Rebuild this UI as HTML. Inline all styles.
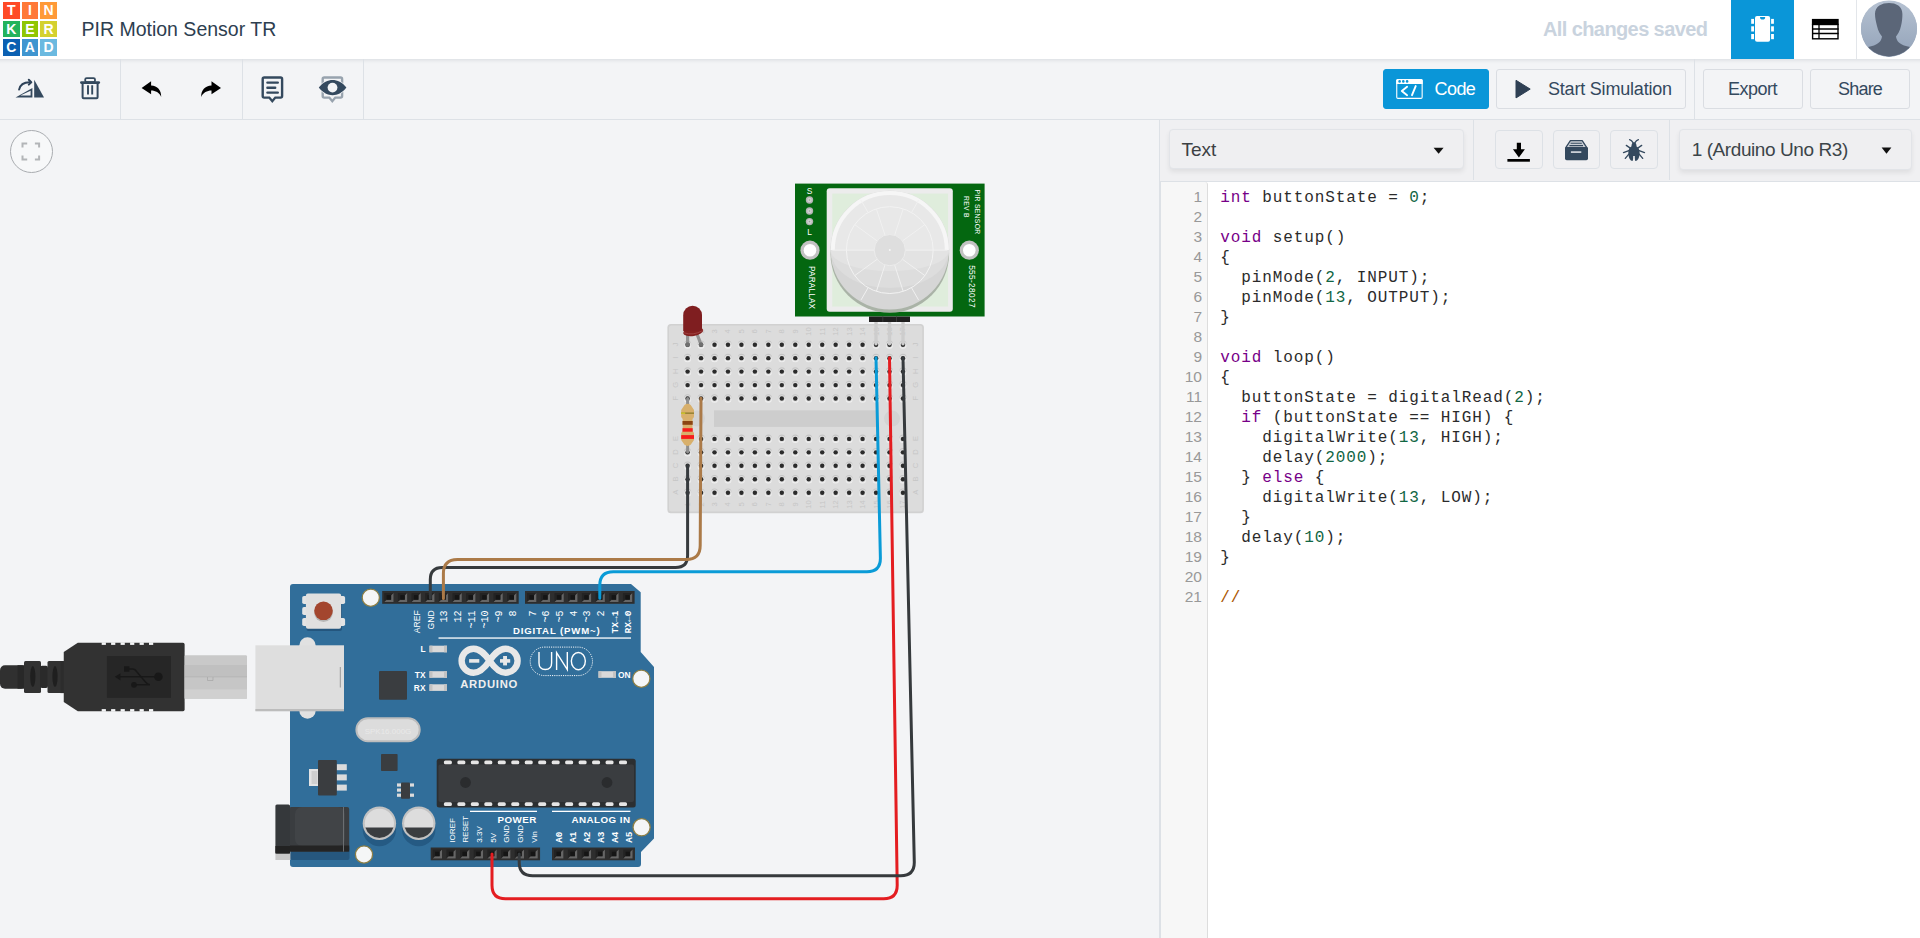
<!DOCTYPE html>
<html><head><meta charset="utf-8">
<style>
html,body{margin:0;padding:0;width:1920px;height:938px;overflow:hidden;background:#f3f4f6;font-family:"Liberation Sans",sans-serif;}
.a{position:absolute;}
#hdr{left:0;top:0;width:1920px;height:59px;background:#fff;z-index:3;}
.lc{position:absolute;width:16.6px;height:16.6px;color:#fff;font-weight:bold;font-size:14px;line-height:17px;text-align:center;}
#tb{left:0;top:59px;width:1920px;height:60px;background:linear-gradient(#dfe3e7 0px,#e5e7ea 1px,#eaebee 2px,#eef0f2 3px,#f1f2f4 4px,#f3f4f6 5px);border-bottom:1px solid #dde1e6;z-index:2;}
.vsep{position:absolute;width:1px;background:#dde1e6;}
.btn{position:absolute;box-sizing:border-box;height:40px;border:1px solid #dadde2;border-radius:3px;background:#f3f4f6;color:#34495e;font-size:18px;}
.btn span{position:absolute;white-space:nowrap;}
#cv{left:0;top:120px;width:1159px;height:818px;background:#f3f4f6;overflow:hidden;}
#cp{left:1159px;top:120px;width:761px;height:818px;background:#f0f0f2;border-left:1px solid #dde1e6;}
.code{position:absolute;left:1220.6px;top:0;font-family:"Liberation Mono",monospace;font-size:16px;letter-spacing:0.9px;line-height:20px;white-space:pre;color:#2b2b2b;}
.ln{position:absolute;right:0;font-family:"Liberation Sans",sans-serif;font-size:15.5px;color:#999;text-align:right;}
.k{color:#770088}.n{color:#116644}.c{color:#aa5500}
</style></head><body>

<!-- HEADER -->
<div id="hdr" class="a">
  <div class="lc" style="left:3px;top:2px;background:#ff4a26">T</div>
  <div class="lc" style="left:21.6px;top:2px;background:#ff7938">I</div>
  <div class="lc" style="left:40.2px;top:2px;background:#ff9a38">N</div>
  <div class="lc" style="left:3px;top:20.6px;background:#22b35c">K</div>
  <div class="lc" style="left:21.6px;top:20.6px;background:#8fc602">E</div>
  <div class="lc" style="left:40.2px;top:20.6px;background:#d4d12f">R</div>
  <div class="lc" style="left:3px;top:39.2px;background:#0b60b2">C</div>
  <div class="lc" style="left:21.6px;top:39.2px;background:#3f95d0">A</div>
  <div class="lc" style="left:40.2px;top:39.2px;background:#6ab9e0">D</div>
  <div class="a" id="title" style="left:81.5px;top:17px;font-size:19.5px;color:#2d3e50;white-space:nowrap;line-height:24px;">PIR Motion Sensor TR</div>
  <div class="a" id="saved" style="left:1543px;top:17px;font-size:20px;font-weight:bold;color:#c9d3de;white-space:nowrap;line-height:24px;letter-spacing:-0.6px;">All changes saved</div>
  <div class="a" style="left:1731px;top:0;width:63px;height:59px;background:#0a96d8;"></div>
  <div class="a" style="left:1856px;top:0;width:1px;height:59px;background:#e3e6ea;"></div>
  <div class="a" style="left:1861px;top:1px;width:56px;height:56px;border-radius:50%;background:#9aa8bb;overflow:hidden;"></div>
</div>

<!-- TOOLBAR -->
<div id="tb" class="a">
  <div class="vsep" style="left:120px;top:0;height:60px"></div>
  <div class="vsep" style="left:242px;top:0;height:60px"></div>
  <div class="vsep" style="left:363px;top:0;height:60px"></div>
  <div class="vsep" style="left:1694px;top:0;height:60px"></div>
  <div class="btn" style="left:1383px;top:10px;width:106px;background:#0a96d8;border-color:#0a96d8;color:#fff;"><span id="tcode" style="left:50.5px;top:9px;letter-spacing:-0.55px;">Code</span></div>
  <div class="btn" style="left:1496px;top:10px;width:190px;"><span id="tsim" style="left:51px;top:9px;letter-spacing:-0.2px;">Start Simulation</span></div>
  <div class="btn" style="left:1703px;top:10px;width:100px;"><span id="texp" style="left:24px;top:9px;letter-spacing:-0.5px;">Export</span></div>
  <div class="btn" style="left:1810px;top:10px;width:100px;"><span id="tshare" style="left:27px;top:9px;letter-spacing:-0.8px;">Share</span></div>
</div>

<!-- CANVAS -->
<div id="cv" class="a">
  <div class="a" style="left:10px;top:10px;width:41px;height:41px;border:1px solid #a9acb0;border-radius:50%;background:#f7f8f9;"></div>
</div>

<!--CIRC-->
<svg class="a" id="circ" style="left:0;top:0;z-index:1;" width="1920" height="938" viewBox="0 0 1920 938">
<g id="usb">
<rect x="0" y="665.2" width="26" height="23.5" rx="5" fill="#303030"/><rect x="17.5" y="665.2" width="8" height="23.5" fill="#282828"/>
<rect x="24" y="661.1" width="17" height="32" rx="1.5" fill="#323232"/>
<rect x="40" y="665.8" width="8" height="22.3" rx="2" fill="#2a2a2a"/>
<rect x="47.5" y="661.1" width="17" height="32" rx="1.5" fill="#323232"/><rect x="60.5" y="661.1" width="3.5" height="32" fill="#2c2c2c"/>
<ellipse cx="32.8" cy="676.6" rx="2.6" ry="10.5" fill="#1f1f1f"/>
<ellipse cx="55" cy="676.6" rx="2.6" ry="10.5" fill="#1f1f1f"/>
<path d="M63.75 652 L77.8 642.8 H183 Q184.6 642.8 184.6 644.4 V709.6 Q184.6 711.2 183 711.2 H77.8 L63.75 702 Z" fill="#323232"/>
<rect x="101.7" y="642.3" width="4.2" height="2.6" fill="#f3f4f6"/>
<rect x="101.7" y="709.1" width="4.2" height="2.6" fill="#f3f4f6"/>
<rect x="111.1" y="642.3" width="4.2" height="2.6" fill="#f3f4f6"/>
<rect x="111.1" y="709.1" width="4.2" height="2.6" fill="#f3f4f6"/>
<rect x="120.6" y="642.3" width="4.2" height="2.6" fill="#f3f4f6"/>
<rect x="120.6" y="709.1" width="4.2" height="2.6" fill="#f3f4f6"/>
<rect x="130.1" y="642.3" width="4.2" height="2.6" fill="#f3f4f6"/>
<rect x="130.1" y="709.1" width="4.2" height="2.6" fill="#f3f4f6"/>
<rect x="139.6" y="642.3" width="4.2" height="2.6" fill="#f3f4f6"/>
<rect x="139.6" y="709.1" width="4.2" height="2.6" fill="#f3f4f6"/>
<rect x="149.0" y="642.3" width="4.2" height="2.6" fill="#f3f4f6"/>
<rect x="149.0" y="709.1" width="4.2" height="2.6" fill="#f3f4f6"/>
<rect x="106.9" y="656" width="64.1" height="41.8" fill="#262626"/>
<g fill="#181818" stroke="#181818">
<path d="M119 676.8 H157" stroke-width="1.6" fill="none"/>
<path d="M114.8 676.8 L120.5 673.2 L120.5 680.4 Z" stroke="none"/>
<circle cx="158.4" cy="676.8" r="4.3" stroke="none"/>
<rect x="124" y="666.3" width="5.4" height="5.4" stroke="none"/>
<path d="M129 669 H133 Q135 669 137 672 L141 676.8" fill="none" stroke-width="1.5"/>
<path d="M141 676.8 L145.5 682 Q147.5 684.8 150 684.8 H134" fill="none" stroke-width="1.5"/>
<circle cx="134" cy="684.8" r="2.9" stroke="none"/>
</g>
<rect x="184.7" y="655.25" width="62.3" height="43.5" rx="1.2" fill="#c9c9c9"/>
<rect x="184.7" y="665" width="62.3" height="11.8" fill="#c0c0c0"/>
<rect x="184.7" y="676.6" width="62.3" height="0.9" fill="#adadad"/>
<rect x="184.7" y="677.5" width="62.3" height="12" fill="#c6c6c6"/>
<rect x="184.7" y="689.4" width="62.3" height="9.35" fill="#d0d0d0"/>
<path d="M207.5 677 V680.5 H213 V677" fill="none" stroke="#aaaaaa" stroke-width="0.8"/>
</g>
<g id="arduino">
<path d="M293 584 H631 L640.7 592.3 V652 L654 667 V838.5 L641 852 V864 Q641 867 638 867 H293 Q290 867 290 864 V587 Q290 584 293 584 Z" fill="#316e9a"/>
<circle cx="307.5" cy="645.5" r="8.2" fill="#e1e1e1"/>
<circle cx="307.5" cy="710.5" r="8.2" fill="#e1e1e1"/>
<rect x="255.4" y="645.3" width="88.6" height="65.7" fill="#dedede"/>
<rect x="255.4" y="709" width="88.6" height="2.3" fill="#bcbcbc"/>
<rect x="339.8" y="667" width="1" height="20.5" fill="#9a9a9a"/>
<rect x="306.5" y="595" width="35.5" height="36" rx="2" fill="#24567e"/>
<rect x="302.2" y="596" width="6" height="8" rx="1.8" fill="#e4e4e4"/>
<rect x="302.2" y="607.1" width="6" height="8" rx="1.8" fill="#e4e4e4"/>
<rect x="302.2" y="618" width="6" height="8" rx="1.8" fill="#e4e4e4"/>
<rect x="339" y="596" width="6.1" height="8" rx="1.8" fill="#e4e4e4"/>
<rect x="339" y="618" width="6.1" height="8" rx="1.8" fill="#e4e4e4"/>
<rect x="305.9" y="593.5" width="35.2" height="35.2" rx="2" fill="#e0e0e0"/>
<circle cx="323.5" cy="612.6" r="9.3" fill="#9a9a9a" opacity="0.6"/>
<circle cx="323.5" cy="610.8" r="9.3" fill="#a3462e"/>
<circle cx="370.8" cy="597.7" r="8.6" fill="#f5f6f7" stroke="#8e7f45" stroke-width="1.3"/>
<circle cx="641.3" cy="678.7" r="8.6" fill="#f5f6f7" stroke="#8e7f45" stroke-width="1.3"/>
<circle cx="641.6" cy="827.3" r="8.6" fill="#f5f6f7" stroke="#8e7f45" stroke-width="1.3"/>
<circle cx="364" cy="854.5" r="8.6" fill="#f5f6f7" stroke="#8e7f45" stroke-width="1.3"/>
<rect x="382.2" y="591" width="136.50" height="12.8" fill="#2e2e2e"/>
<rect x="384.22" y="593.10" width="9.3" height="9" fill="#232323"/>
<path d="M393.52 593.10 V602.10 H384.22 L386.62 599.70 H391.12 V595.40 Z" fill="#666"/>
<rect x="386.62" y="595.20" width="4.5" height="4.5" fill="#151515"/>
<rect x="397.88" y="593.10" width="9.3" height="9" fill="#232323"/>
<path d="M407.18 593.10 V602.10 H397.88 L400.28 599.70 H404.78 V595.40 Z" fill="#666"/>
<rect x="400.28" y="595.20" width="4.5" height="4.5" fill="#151515"/>
<rect x="411.52" y="593.10" width="9.3" height="9" fill="#232323"/>
<path d="M420.82 593.10 V602.10 H411.52 L413.93 599.70 H418.43 V595.40 Z" fill="#666"/>
<rect x="413.93" y="595.20" width="4.5" height="4.5" fill="#151515"/>
<rect x="425.17" y="593.10" width="9.3" height="9" fill="#232323"/>
<path d="M434.47 593.10 V602.10 H425.17 L427.57 599.70 H432.07 V595.40 Z" fill="#666"/>
<rect x="427.57" y="595.20" width="4.5" height="4.5" fill="#151515"/>
<rect x="438.82" y="593.10" width="9.3" height="9" fill="#232323"/>
<path d="M448.12 593.10 V602.10 H438.82 L441.23 599.70 H445.73 V595.40 Z" fill="#666"/>
<rect x="441.23" y="595.20" width="4.5" height="4.5" fill="#151515"/>
<rect x="452.47" y="593.10" width="9.3" height="9" fill="#232323"/>
<path d="M461.77 593.10 V602.10 H452.47 L454.88 599.70 H459.38 V595.40 Z" fill="#666"/>
<rect x="454.88" y="595.20" width="4.5" height="4.5" fill="#151515"/>
<rect x="466.12" y="593.10" width="9.3" height="9" fill="#232323"/>
<path d="M475.43 593.10 V602.10 H466.12 L468.53 599.70 H473.03 V595.40 Z" fill="#666"/>
<rect x="468.53" y="595.20" width="4.5" height="4.5" fill="#151515"/>
<rect x="479.77" y="593.10" width="9.3" height="9" fill="#232323"/>
<path d="M489.07 593.10 V602.10 H479.77 L482.18 599.70 H486.68 V595.40 Z" fill="#666"/>
<rect x="482.18" y="595.20" width="4.5" height="4.5" fill="#151515"/>
<rect x="493.43" y="593.10" width="9.3" height="9" fill="#232323"/>
<path d="M502.73 593.10 V602.10 H493.43 L495.83 599.70 H500.33 V595.40 Z" fill="#666"/>
<rect x="495.83" y="595.20" width="4.5" height="4.5" fill="#151515"/>
<rect x="507.07" y="593.10" width="9.3" height="9" fill="#232323"/>
<path d="M516.38 593.10 V602.10 H507.07 L509.48 599.70 H513.98 V595.40 Z" fill="#666"/>
<rect x="509.48" y="595.20" width="4.5" height="4.5" fill="#151515"/>
<rect x="525" y="591" width="109.60" height="12.8" fill="#2e2e2e"/>
<rect x="527.05" y="593.10" width="9.3" height="9" fill="#232323"/>
<path d="M536.35 593.10 V602.10 H527.05 L529.45 599.70 H533.95 V595.40 Z" fill="#666"/>
<rect x="529.45" y="595.20" width="4.5" height="4.5" fill="#151515"/>
<rect x="540.75" y="593.10" width="9.3" height="9" fill="#232323"/>
<path d="M550.05 593.10 V602.10 H540.75 L543.15 599.70 H547.65 V595.40 Z" fill="#666"/>
<rect x="543.15" y="595.20" width="4.5" height="4.5" fill="#151515"/>
<rect x="554.45" y="593.10" width="9.3" height="9" fill="#232323"/>
<path d="M563.75 593.10 V602.10 H554.45 L556.85 599.70 H561.35 V595.40 Z" fill="#666"/>
<rect x="556.85" y="595.20" width="4.5" height="4.5" fill="#151515"/>
<rect x="568.15" y="593.10" width="9.3" height="9" fill="#232323"/>
<path d="M577.45 593.10 V602.10 H568.15 L570.55 599.70 H575.05 V595.40 Z" fill="#666"/>
<rect x="570.55" y="595.20" width="4.5" height="4.5" fill="#151515"/>
<rect x="581.85" y="593.10" width="9.3" height="9" fill="#232323"/>
<path d="M591.15 593.10 V602.10 H581.85 L584.25 599.70 H588.75 V595.40 Z" fill="#666"/>
<rect x="584.25" y="595.20" width="4.5" height="4.5" fill="#151515"/>
<rect x="595.55" y="593.10" width="9.3" height="9" fill="#232323"/>
<path d="M604.85 593.10 V602.10 H595.55 L597.95 599.70 H602.45 V595.40 Z" fill="#666"/>
<rect x="597.95" y="595.20" width="4.5" height="4.5" fill="#151515"/>
<rect x="609.25" y="593.10" width="9.3" height="9" fill="#232323"/>
<path d="M618.55 593.10 V602.10 H609.25 L611.65 599.70 H616.15 V595.40 Z" fill="#666"/>
<rect x="611.65" y="595.20" width="4.5" height="4.5" fill="#151515"/>
<rect x="622.95" y="593.10" width="9.3" height="9" fill="#232323"/>
<path d="M632.25 593.10 V602.10 H622.95 L625.35 599.70 H629.85 V595.40 Z" fill="#666"/>
<rect x="625.35" y="595.20" width="4.5" height="4.5" fill="#151515"/>
<rect x="430.7" y="847.5" width="109.36" height="12.8" fill="#2e2e2e"/>
<rect x="432.73" y="849.60" width="9.3" height="9" fill="#232323"/>
<path d="M442.03 849.60 V858.60 H432.73 L435.13 856.20 H439.63 V851.90 Z" fill="#666"/>
<rect x="435.13" y="851.70" width="4.5" height="4.5" fill="#151515"/>
<rect x="446.40" y="849.60" width="9.3" height="9" fill="#232323"/>
<path d="M455.70 849.60 V858.60 H446.40 L448.81 856.20 H453.31 V851.90 Z" fill="#666"/>
<rect x="448.81" y="851.70" width="4.5" height="4.5" fill="#151515"/>
<rect x="460.07" y="849.60" width="9.3" height="9" fill="#232323"/>
<path d="M469.38 849.60 V858.60 H460.07 L462.48 856.20 H466.98 V851.90 Z" fill="#666"/>
<rect x="462.48" y="851.70" width="4.5" height="4.5" fill="#151515"/>
<rect x="473.74" y="849.60" width="9.3" height="9" fill="#232323"/>
<path d="M483.04 849.60 V858.60 H473.74 L476.14 856.20 H480.64 V851.90 Z" fill="#666"/>
<rect x="476.14" y="851.70" width="4.5" height="4.5" fill="#151515"/>
<rect x="487.41" y="849.60" width="9.3" height="9" fill="#232323"/>
<path d="M496.71 849.60 V858.60 H487.41 L489.81 856.20 H494.31 V851.90 Z" fill="#666"/>
<rect x="489.81" y="851.70" width="4.5" height="4.5" fill="#151515"/>
<rect x="501.08" y="849.60" width="9.3" height="9" fill="#232323"/>
<path d="M510.38 849.60 V858.60 H501.08 L503.49 856.20 H507.99 V851.90 Z" fill="#666"/>
<rect x="503.49" y="851.70" width="4.5" height="4.5" fill="#151515"/>
<rect x="514.75" y="849.60" width="9.3" height="9" fill="#232323"/>
<path d="M524.05 849.60 V858.60 H514.75 L517.15 856.20 H521.65 V851.90 Z" fill="#666"/>
<rect x="517.15" y="851.70" width="4.5" height="4.5" fill="#151515"/>
<rect x="528.43" y="849.60" width="9.3" height="9" fill="#232323"/>
<path d="M537.73 849.60 V858.60 H528.43 L530.83 856.20 H535.33 V851.90 Z" fill="#666"/>
<rect x="530.83" y="851.70" width="4.5" height="4.5" fill="#151515"/>
<rect x="552" y="847.5" width="82.98" height="12.8" fill="#2e2e2e"/>
<rect x="554.12" y="849.60" width="9.3" height="9" fill="#232323"/>
<path d="M563.41 849.60 V858.60 H554.12 L556.51 856.20 H561.01 V851.90 Z" fill="#666"/>
<rect x="556.51" y="851.70" width="4.5" height="4.5" fill="#151515"/>
<rect x="567.95" y="849.60" width="9.3" height="9" fill="#232323"/>
<path d="M577.25 849.60 V858.60 H567.95 L570.35 856.20 H574.85 V851.90 Z" fill="#666"/>
<rect x="570.35" y="851.70" width="4.5" height="4.5" fill="#151515"/>
<rect x="581.78" y="849.60" width="9.3" height="9" fill="#232323"/>
<path d="M591.08 849.60 V858.60 H581.78 L584.18 856.20 H588.68 V851.90 Z" fill="#666"/>
<rect x="584.18" y="851.70" width="4.5" height="4.5" fill="#151515"/>
<rect x="595.61" y="849.60" width="9.3" height="9" fill="#232323"/>
<path d="M604.90 849.60 V858.60 H595.61 L598.00 856.20 H602.50 V851.90 Z" fill="#666"/>
<rect x="598.00" y="851.70" width="4.5" height="4.5" fill="#151515"/>
<rect x="609.44" y="849.60" width="9.3" height="9" fill="#232323"/>
<path d="M618.74 849.60 V858.60 H609.44 L611.84 856.20 H616.34 V851.90 Z" fill="#666"/>
<rect x="611.84" y="851.70" width="4.5" height="4.5" fill="#151515"/>
<rect x="623.27" y="849.60" width="9.3" height="9" fill="#232323"/>
<path d="M632.57 849.60 V858.60 H623.27 L625.67 856.20 H630.17 V851.90 Z" fill="#666"/>
<rect x="625.67" y="851.70" width="4.5" height="4.5" fill="#151515"/>
<text transform="translate(416.93,610.30) rotate(-90)" font-family='"Liberation Sans"' font-size="8.6" font-weight="normal" fill="#fff" text-anchor="end" dominant-baseline="central" letter-spacing="0">AREF</text>
<text transform="translate(430.57,610.30) rotate(-90)" font-family='"Liberation Sans"' font-size="8.6" font-weight="normal" fill="#fff" text-anchor="end" dominant-baseline="central" letter-spacing="0">GND</text>
<text transform="translate(444.82,610.50) rotate(-90)" font-family='"Liberation Mono"' font-size="10" font-weight="normal" fill="#fff" text-anchor="end" dominant-baseline="central" letter-spacing="0">13</text>
<text transform="translate(458.47,610.50) rotate(-90)" font-family='"Liberation Mono"' font-size="10" font-weight="normal" fill="#fff" text-anchor="end" dominant-baseline="central" letter-spacing="0">12</text>
<text transform="translate(472.12,610.50) rotate(-90)" font-family='"Liberation Mono"' font-size="10" font-weight="normal" fill="#fff" text-anchor="end" dominant-baseline="central" letter-spacing="0">~11</text>
<text transform="translate(485.77,610.50) rotate(-90)" font-family='"Liberation Mono"' font-size="10" font-weight="normal" fill="#fff" text-anchor="end" dominant-baseline="central" letter-spacing="0">~10</text>
<text transform="translate(499.43,610.50) rotate(-90)" font-family='"Liberation Mono"' font-size="10" font-weight="normal" fill="#fff" text-anchor="end" dominant-baseline="central" letter-spacing="0">~9</text>
<text transform="translate(513.08,610.50) rotate(-90)" font-family='"Liberation Mono"' font-size="10" font-weight="normal" fill="#fff" text-anchor="end" dominant-baseline="central" letter-spacing="0">8</text>
<text transform="translate(533.05,610.50) rotate(-90)" font-family='"Liberation Mono"' font-size="10" font-weight="normal" fill="#fff" text-anchor="end" dominant-baseline="central" letter-spacing="0">7</text>
<text transform="translate(546.75,610.50) rotate(-90)" font-family='"Liberation Mono"' font-size="10" font-weight="normal" fill="#fff" text-anchor="end" dominant-baseline="central" letter-spacing="0">~6</text>
<text transform="translate(560.45,610.50) rotate(-90)" font-family='"Liberation Mono"' font-size="10" font-weight="normal" fill="#fff" text-anchor="end" dominant-baseline="central" letter-spacing="0">~5</text>
<text transform="translate(574.15,610.50) rotate(-90)" font-family='"Liberation Mono"' font-size="10" font-weight="normal" fill="#fff" text-anchor="end" dominant-baseline="central" letter-spacing="0">4</text>
<text transform="translate(587.85,610.50) rotate(-90)" font-family='"Liberation Mono"' font-size="10" font-weight="normal" fill="#fff" text-anchor="end" dominant-baseline="central" letter-spacing="0">~3</text>
<text transform="translate(601.55,610.50) rotate(-90)" font-family='"Liberation Mono"' font-size="10" font-weight="normal" fill="#fff" text-anchor="end" dominant-baseline="central" letter-spacing="0">2</text>
<text transform="translate(615.25,610.50) rotate(-90)" font-family='"Liberation Mono"' font-size="9.6" font-weight="bold" fill="#fff" text-anchor="end" dominant-baseline="central" letter-spacing="0">TX→1</text>
<text transform="translate(628.95,610.50) rotate(-90)" font-family='"Liberation Mono"' font-size="9.6" font-weight="bold" fill="#fff" text-anchor="end" dominant-baseline="central" letter-spacing="0">RX←0</text>
<text x="513" y="634.4" font-family="Liberation Sans" font-size="9.6" font-weight="bold" fill="#fff" letter-spacing="0.85">DIGITAL (PWM~)</text>
<rect x="438.5" y="637.4" width="192.5" height="1.3" fill="#fff"/>
<rect x="429.5" y="645.7" width="17.5" height="6.6" fill="#d9d9d9"/>
<rect x="429.5" y="645.7" width="3" height="6.6" fill="#c3c3c3"/><rect x="444" y="645.7" width="3" height="6.6" fill="#c3c3c3"/>
<text x="425.5" y="652.1" font-family="Liberation Sans" font-size="8.4" font-weight="bold" fill="#fff" text-anchor="end">L</text>
<rect x="429.5" y="671.2" width="17.5" height="6.6" fill="#d9d9d9"/>
<rect x="429.5" y="671.2" width="3" height="6.6" fill="#c3c3c3"/><rect x="444" y="671.2" width="3" height="6.6" fill="#c3c3c3"/>
<text x="425.5" y="677.6" font-family="Liberation Sans" font-size="8.4" font-weight="bold" fill="#fff" text-anchor="end">TX</text>
<rect x="429.5" y="684.3" width="17.5" height="6.6" fill="#d9d9d9"/>
<rect x="429.5" y="684.3" width="3" height="6.6" fill="#c3c3c3"/><rect x="444" y="684.3" width="3" height="6.6" fill="#c3c3c3"/>
<text x="425.5" y="690.7" font-family="Liberation Sans" font-size="8.4" font-weight="bold" fill="#fff" text-anchor="end">RX</text>
<rect x="598.5" y="671.2" width="17.5" height="6.6" fill="#d9d9d9"/>
<rect x="598.5" y="671.2" width="3" height="6.6" fill="#c3c3c3"/><rect x="613" y="671.2" width="3" height="6.6" fill="#c3c3c3"/>
<text x="618" y="678" font-family="Liberation Sans" font-size="8.4" font-weight="bold" fill="#fff">ON</text>
<rect x="379" y="671" width="28" height="28.7" rx="1" fill="#3a3d40"/>
<path d="M489.6 660.7 C486 655.5 481 648.7 473.6 648.7 A12 12 0 0 0 473.6 672.7 C481 672.7 486 666 489.6 660.7 C493.2 655.5 498.2 648.7 505.6 648.7 A12 12 0 0 1 505.6 672.7 C498.2 672.7 493.2 666 489.6 660.7 Z" fill="none" stroke="#e8e8e8" stroke-width="6.4"/>
<rect x="469.1" y="659.1" width="10.2" height="3.6" fill="#e8e8e8"/>
<rect x="500" y="659.1" width="10.2" height="3.6" fill="#e8e8e8"/><rect x="503.1" y="656" width="3.9" height="9.4" fill="#e8e8e8"/>
<text x="460.2" y="688.2" font-family="Liberation Sans" font-size="11.3" font-weight="bold" fill="#eeeeee" letter-spacing="0.75">ARDUINO</text>
<rect x="530.2" y="647.1" width="62.3" height="28.5" rx="14.25" fill="none" stroke="#fff" stroke-width="1" stroke-dasharray="1.1 1.1"/>
<g fill="none" stroke="#fff" stroke-width="1.4">
<path d="M539 652.1 V663 Q539 669.5 545.3 669.5 Q551.6 669.5 551.6 663 V652.1"/>
<path d="M556.6 670 V652.6 L567.3 669.5 V652.1"/>
<ellipse cx="578.35" cy="661.1" rx="7" ry="8.6"/>
</g>
<rect x="356.4" y="718.3" width="63.3" height="22.9" rx="11.45" fill="#dcdcdc" stroke="#bdbdbd" stroke-width="2"/>
<text x="388" y="733.6" font-family="Liberation Sans" font-size="8" fill="#e9e9e9" text-anchor="middle">SPK16.000G</text>
<rect x="381" y="754" width="16.6" height="17" rx="0.8" fill="#3a3d40"/>
<rect x="309" y="769" width="10" height="17" fill="#e4e4e4"/>
<rect x="311.5" y="771" width="6" height="13" fill="#cfcfcf"/>
<rect x="336.5" y="764.2" width="10.3" height="6" fill="#dcdcdc"/>
<rect x="336.5" y="774.4" width="10.3" height="6" fill="#dcdcdc"/>
<rect x="336.5" y="784.6" width="10.3" height="6" fill="#dcdcdc"/>
<rect x="318" y="759.9" width="18.8" height="35.5" rx="1" fill="#3a3d40"/>
<rect x="397" y="783.4" width="5" height="3.2" fill="#dcdcdc"/>
<rect x="397" y="788.5" width="5" height="3.2" fill="#dcdcdc"/>
<rect x="397" y="793.6" width="5" height="3.2" fill="#dcdcdc"/>
<rect x="409" y="783.4" width="5" height="3.2" fill="#dcdcdc"/>
<rect x="409" y="793.6" width="5" height="3.2" fill="#dcdcdc"/>
<rect x="401" y="782.5" width="9" height="16.3" rx="0.8" fill="#3a3d40"/>
<circle cx="379.4" cy="829.5" r="16.7" fill="#255a83"/>
<circle cx="379.4" cy="823.3" r="16.7" fill="#c2c2c2"/>
<circle cx="379.4" cy="823.3" r="14.6" fill="#dddddd"/>
<path d="M365.35 827.4 H393.45 A14.6 14.6 0 0 1 365.35 827.4 Z" fill="#3a3d40"/>
<circle cx="418.75" cy="829.5" r="16.7" fill="#255a83"/>
<circle cx="418.75" cy="823.3" r="16.7" fill="#c2c2c2"/>
<circle cx="418.75" cy="823.3" r="14.6" fill="#dddddd"/>
<path d="M404.70 827.4 H432.80 A14.6 14.6 0 0 1 404.70 827.4 Z" fill="#3a3d40"/>
<rect x="290" y="846" width="59.5" height="14" rx="2" fill="#26577e"/>
<rect x="275.4" y="849" width="15" height="11" fill="#c8c8c8"/>
<rect x="289.2" y="807" width="60" height="44.6" rx="2" fill="#3a3d40"/>
<rect x="295" y="807" width="50" height="39" rx="7" fill="#414447"/>
<rect x="289.2" y="845.5" width="60" height="6.1" fill="#242424"/>
<rect x="343" y="807" width="1" height="44.6" fill="#6b6e71"/>
<rect x="275.4" y="804.6" width="14.6" height="48.9" rx="1.5" fill="#35383b"/>
<rect x="275.4" y="846" width="14.6" height="7.5" fill="#222"/>
<rect x="436.7" y="758.7" width="199" height="48.8" rx="2.5" fill="#2c2f31"/>
<rect x="438.4" y="764.5" width="195.6" height="37.5" rx="2" fill="#3a3d40"/>
<rect x="443.90" y="760.6" width="8" height="3.6" rx="1.5" fill="#e6e6e6"/>
<rect x="443.90" y="802.3" width="8" height="3.6" rx="1.5" fill="#e6e6e6"/>
<rect x="457.37" y="760.6" width="8" height="3.6" rx="1.5" fill="#e6e6e6"/>
<rect x="457.37" y="802.3" width="8" height="3.6" rx="1.5" fill="#e6e6e6"/>
<rect x="470.84" y="760.6" width="8" height="3.6" rx="1.5" fill="#e6e6e6"/>
<rect x="470.84" y="802.3" width="8" height="3.6" rx="1.5" fill="#e6e6e6"/>
<rect x="484.31" y="760.6" width="8" height="3.6" rx="1.5" fill="#e6e6e6"/>
<rect x="484.31" y="802.3" width="8" height="3.6" rx="1.5" fill="#e6e6e6"/>
<rect x="497.78" y="760.6" width="8" height="3.6" rx="1.5" fill="#e6e6e6"/>
<rect x="497.78" y="802.3" width="8" height="3.6" rx="1.5" fill="#e6e6e6"/>
<rect x="511.25" y="760.6" width="8" height="3.6" rx="1.5" fill="#e6e6e6"/>
<rect x="511.25" y="802.3" width="8" height="3.6" rx="1.5" fill="#e6e6e6"/>
<rect x="524.72" y="760.6" width="8" height="3.6" rx="1.5" fill="#e6e6e6"/>
<rect x="524.72" y="802.3" width="8" height="3.6" rx="1.5" fill="#e6e6e6"/>
<rect x="538.19" y="760.6" width="8" height="3.6" rx="1.5" fill="#e6e6e6"/>
<rect x="538.19" y="802.3" width="8" height="3.6" rx="1.5" fill="#e6e6e6"/>
<rect x="551.66" y="760.6" width="8" height="3.6" rx="1.5" fill="#e6e6e6"/>
<rect x="551.66" y="802.3" width="8" height="3.6" rx="1.5" fill="#e6e6e6"/>
<rect x="565.13" y="760.6" width="8" height="3.6" rx="1.5" fill="#e6e6e6"/>
<rect x="565.13" y="802.3" width="8" height="3.6" rx="1.5" fill="#e6e6e6"/>
<rect x="578.60" y="760.6" width="8" height="3.6" rx="1.5" fill="#e6e6e6"/>
<rect x="578.60" y="802.3" width="8" height="3.6" rx="1.5" fill="#e6e6e6"/>
<rect x="592.07" y="760.6" width="8" height="3.6" rx="1.5" fill="#e6e6e6"/>
<rect x="592.07" y="802.3" width="8" height="3.6" rx="1.5" fill="#e6e6e6"/>
<rect x="605.54" y="760.6" width="8" height="3.6" rx="1.5" fill="#e6e6e6"/>
<rect x="605.54" y="802.3" width="8" height="3.6" rx="1.5" fill="#e6e6e6"/>
<rect x="619.01" y="760.6" width="8" height="3.6" rx="1.5" fill="#e6e6e6"/>
<rect x="619.01" y="802.3" width="8" height="3.6" rx="1.5" fill="#e6e6e6"/>
<circle cx="465.5" cy="782.5" r="5.4" fill="#2a2c2e"/><circle cx="607" cy="782.5" r="5.4" fill="#2a2c2e"/>
<rect x="470" y="810.7" width="67" height="1.3" fill="#fff"/>
<rect x="552" y="810.7" width="78.5" height="1.3" fill="#fff"/>
<text x="536.8" y="822.6" font-family="Liberation Sans" font-size="9.8" font-weight="bold" fill="#fff" text-anchor="end" letter-spacing="0.45">POWER</text>
<text x="630.5" y="822.6" font-family="Liberation Sans" font-size="9.8" font-weight="bold" fill="#fff" text-anchor="end" letter-spacing="0.45">ANALOG IN</text>
<text transform="translate(452.00,842.80) rotate(-90)" font-family='"Liberation Sans"' font-size="8.1" font-weight="normal" fill="#fff" text-anchor="start" dominant-baseline="central" letter-spacing="0">IOREF</text>
<text transform="translate(465.68,842.80) rotate(-90)" font-family='"Liberation Sans"' font-size="8.1" font-weight="normal" fill="#fff" text-anchor="start" dominant-baseline="central" letter-spacing="0">RESET</text>
<text transform="translate(479.34,842.80) rotate(-90)" font-family='"Liberation Sans"' font-size="8.1" font-weight="normal" fill="#fff" text-anchor="start" dominant-baseline="central" letter-spacing="0">3.3V</text>
<text transform="translate(493.01,842.80) rotate(-90)" font-family='"Liberation Sans"' font-size="8.1" font-weight="normal" fill="#fff" text-anchor="start" dominant-baseline="central" letter-spacing="0">5V</text>
<text transform="translate(506.69,842.80) rotate(-90)" font-family='"Liberation Sans"' font-size="8.1" font-weight="normal" fill="#fff" text-anchor="start" dominant-baseline="central" letter-spacing="0">GND</text>
<text transform="translate(520.35,842.80) rotate(-90)" font-family='"Liberation Sans"' font-size="8.1" font-weight="normal" fill="#fff" text-anchor="start" dominant-baseline="central" letter-spacing="0">GND</text>
<text transform="translate(534.02,842.80) rotate(-90)" font-family='"Liberation Sans"' font-size="8.1" font-weight="normal" fill="#fff" text-anchor="start" dominant-baseline="central" letter-spacing="0">Vin</text>
<text transform="translate(559.91,842.80) rotate(-90)" font-family='"Liberation Mono"' font-size="9.4" font-weight="bold" fill="#fff" text-anchor="start" dominant-baseline="central" letter-spacing="0">A0</text>
<text transform="translate(573.75,842.80) rotate(-90)" font-family='"Liberation Mono"' font-size="9.4" font-weight="bold" fill="#fff" text-anchor="start" dominant-baseline="central" letter-spacing="0">A1</text>
<text transform="translate(587.58,842.80) rotate(-90)" font-family='"Liberation Mono"' font-size="9.4" font-weight="bold" fill="#fff" text-anchor="start" dominant-baseline="central" letter-spacing="0">A2</text>
<text transform="translate(601.40,842.80) rotate(-90)" font-family='"Liberation Mono"' font-size="9.4" font-weight="bold" fill="#fff" text-anchor="start" dominant-baseline="central" letter-spacing="0">A3</text>
<text transform="translate(615.24,842.80) rotate(-90)" font-family='"Liberation Mono"' font-size="9.4" font-weight="bold" fill="#fff" text-anchor="start" dominant-baseline="central" letter-spacing="0">A4</text>
<text transform="translate(629.07,842.80) rotate(-90)" font-family='"Liberation Mono"' font-size="9.4" font-weight="bold" fill="#fff" text-anchor="start" dominant-baseline="central" letter-spacing="0">A5</text>
</g>
<g id="bb">
<rect x="667.4" y="324" width="256.5" height="189.2" rx="3.5" fill="#d1d1d1"/>
<rect x="669" y="325.6" width="253.3" height="186" rx="2.5" fill="#dcdcdc"/>
<circle cx="697" cy="418.6" r="8" fill="#d3d3d3"/><circle cx="892" cy="418.6" r="8" fill="#d3d3d3"/>
<rect x="714" y="410.3" width="163.8" height="16.6" fill="#cdcdcd"/>
<defs><g id="bh"><circle cx="0" cy="-0.7" r="3.5" fill="#c4c4c4"/><circle cx="0" cy="0.7" r="3.5" fill="#f0f0f0"/><circle cx="0" cy="0" r="3.1" fill="#dcdcdc"/><circle cx="0" cy="0.1" r="2.2" fill="#2b2b2b"/></g></defs>
<use href="#bh" x="687.60" y="344.60"/>
<use href="#bh" x="687.60" y="358.06"/>
<use href="#bh" x="687.60" y="371.52"/>
<use href="#bh" x="687.60" y="384.98"/>
<use href="#bh" x="687.60" y="398.44"/>
<use href="#bh" x="687.60" y="438.80"/>
<use href="#bh" x="687.60" y="452.26"/>
<use href="#bh" x="687.60" y="465.72"/>
<use href="#bh" x="687.60" y="479.18"/>
<use href="#bh" x="687.60" y="492.64"/>
<use href="#bh" x="701.06" y="344.60"/>
<use href="#bh" x="701.06" y="358.06"/>
<use href="#bh" x="701.06" y="371.52"/>
<use href="#bh" x="701.06" y="384.98"/>
<use href="#bh" x="701.06" y="398.44"/>
<use href="#bh" x="701.06" y="438.80"/>
<use href="#bh" x="701.06" y="452.26"/>
<use href="#bh" x="701.06" y="465.72"/>
<use href="#bh" x="701.06" y="479.18"/>
<use href="#bh" x="701.06" y="492.64"/>
<use href="#bh" x="714.52" y="344.60"/>
<use href="#bh" x="714.52" y="358.06"/>
<use href="#bh" x="714.52" y="371.52"/>
<use href="#bh" x="714.52" y="384.98"/>
<use href="#bh" x="714.52" y="398.44"/>
<use href="#bh" x="714.52" y="438.80"/>
<use href="#bh" x="714.52" y="452.26"/>
<use href="#bh" x="714.52" y="465.72"/>
<use href="#bh" x="714.52" y="479.18"/>
<use href="#bh" x="714.52" y="492.64"/>
<use href="#bh" x="727.98" y="344.60"/>
<use href="#bh" x="727.98" y="358.06"/>
<use href="#bh" x="727.98" y="371.52"/>
<use href="#bh" x="727.98" y="384.98"/>
<use href="#bh" x="727.98" y="398.44"/>
<use href="#bh" x="727.98" y="438.80"/>
<use href="#bh" x="727.98" y="452.26"/>
<use href="#bh" x="727.98" y="465.72"/>
<use href="#bh" x="727.98" y="479.18"/>
<use href="#bh" x="727.98" y="492.64"/>
<use href="#bh" x="741.44" y="344.60"/>
<use href="#bh" x="741.44" y="358.06"/>
<use href="#bh" x="741.44" y="371.52"/>
<use href="#bh" x="741.44" y="384.98"/>
<use href="#bh" x="741.44" y="398.44"/>
<use href="#bh" x="741.44" y="438.80"/>
<use href="#bh" x="741.44" y="452.26"/>
<use href="#bh" x="741.44" y="465.72"/>
<use href="#bh" x="741.44" y="479.18"/>
<use href="#bh" x="741.44" y="492.64"/>
<use href="#bh" x="754.90" y="344.60"/>
<use href="#bh" x="754.90" y="358.06"/>
<use href="#bh" x="754.90" y="371.52"/>
<use href="#bh" x="754.90" y="384.98"/>
<use href="#bh" x="754.90" y="398.44"/>
<use href="#bh" x="754.90" y="438.80"/>
<use href="#bh" x="754.90" y="452.26"/>
<use href="#bh" x="754.90" y="465.72"/>
<use href="#bh" x="754.90" y="479.18"/>
<use href="#bh" x="754.90" y="492.64"/>
<use href="#bh" x="768.36" y="344.60"/>
<use href="#bh" x="768.36" y="358.06"/>
<use href="#bh" x="768.36" y="371.52"/>
<use href="#bh" x="768.36" y="384.98"/>
<use href="#bh" x="768.36" y="398.44"/>
<use href="#bh" x="768.36" y="438.80"/>
<use href="#bh" x="768.36" y="452.26"/>
<use href="#bh" x="768.36" y="465.72"/>
<use href="#bh" x="768.36" y="479.18"/>
<use href="#bh" x="768.36" y="492.64"/>
<use href="#bh" x="781.82" y="344.60"/>
<use href="#bh" x="781.82" y="358.06"/>
<use href="#bh" x="781.82" y="371.52"/>
<use href="#bh" x="781.82" y="384.98"/>
<use href="#bh" x="781.82" y="398.44"/>
<use href="#bh" x="781.82" y="438.80"/>
<use href="#bh" x="781.82" y="452.26"/>
<use href="#bh" x="781.82" y="465.72"/>
<use href="#bh" x="781.82" y="479.18"/>
<use href="#bh" x="781.82" y="492.64"/>
<use href="#bh" x="795.28" y="344.60"/>
<use href="#bh" x="795.28" y="358.06"/>
<use href="#bh" x="795.28" y="371.52"/>
<use href="#bh" x="795.28" y="384.98"/>
<use href="#bh" x="795.28" y="398.44"/>
<use href="#bh" x="795.28" y="438.80"/>
<use href="#bh" x="795.28" y="452.26"/>
<use href="#bh" x="795.28" y="465.72"/>
<use href="#bh" x="795.28" y="479.18"/>
<use href="#bh" x="795.28" y="492.64"/>
<use href="#bh" x="808.74" y="344.60"/>
<use href="#bh" x="808.74" y="358.06"/>
<use href="#bh" x="808.74" y="371.52"/>
<use href="#bh" x="808.74" y="384.98"/>
<use href="#bh" x="808.74" y="398.44"/>
<use href="#bh" x="808.74" y="438.80"/>
<use href="#bh" x="808.74" y="452.26"/>
<use href="#bh" x="808.74" y="465.72"/>
<use href="#bh" x="808.74" y="479.18"/>
<use href="#bh" x="808.74" y="492.64"/>
<use href="#bh" x="822.20" y="344.60"/>
<use href="#bh" x="822.20" y="358.06"/>
<use href="#bh" x="822.20" y="371.52"/>
<use href="#bh" x="822.20" y="384.98"/>
<use href="#bh" x="822.20" y="398.44"/>
<use href="#bh" x="822.20" y="438.80"/>
<use href="#bh" x="822.20" y="452.26"/>
<use href="#bh" x="822.20" y="465.72"/>
<use href="#bh" x="822.20" y="479.18"/>
<use href="#bh" x="822.20" y="492.64"/>
<use href="#bh" x="835.66" y="344.60"/>
<use href="#bh" x="835.66" y="358.06"/>
<use href="#bh" x="835.66" y="371.52"/>
<use href="#bh" x="835.66" y="384.98"/>
<use href="#bh" x="835.66" y="398.44"/>
<use href="#bh" x="835.66" y="438.80"/>
<use href="#bh" x="835.66" y="452.26"/>
<use href="#bh" x="835.66" y="465.72"/>
<use href="#bh" x="835.66" y="479.18"/>
<use href="#bh" x="835.66" y="492.64"/>
<use href="#bh" x="849.12" y="344.60"/>
<use href="#bh" x="849.12" y="358.06"/>
<use href="#bh" x="849.12" y="371.52"/>
<use href="#bh" x="849.12" y="384.98"/>
<use href="#bh" x="849.12" y="398.44"/>
<use href="#bh" x="849.12" y="438.80"/>
<use href="#bh" x="849.12" y="452.26"/>
<use href="#bh" x="849.12" y="465.72"/>
<use href="#bh" x="849.12" y="479.18"/>
<use href="#bh" x="849.12" y="492.64"/>
<use href="#bh" x="862.58" y="344.60"/>
<use href="#bh" x="862.58" y="358.06"/>
<use href="#bh" x="862.58" y="371.52"/>
<use href="#bh" x="862.58" y="384.98"/>
<use href="#bh" x="862.58" y="398.44"/>
<use href="#bh" x="862.58" y="438.80"/>
<use href="#bh" x="862.58" y="452.26"/>
<use href="#bh" x="862.58" y="465.72"/>
<use href="#bh" x="862.58" y="479.18"/>
<use href="#bh" x="862.58" y="492.64"/>
<use href="#bh" x="876.04" y="344.60"/>
<use href="#bh" x="876.04" y="358.06"/>
<use href="#bh" x="876.04" y="371.52"/>
<use href="#bh" x="876.04" y="384.98"/>
<use href="#bh" x="876.04" y="398.44"/>
<use href="#bh" x="876.04" y="438.80"/>
<use href="#bh" x="876.04" y="452.26"/>
<use href="#bh" x="876.04" y="465.72"/>
<use href="#bh" x="876.04" y="479.18"/>
<use href="#bh" x="876.04" y="492.64"/>
<use href="#bh" x="889.50" y="344.60"/>
<use href="#bh" x="889.50" y="358.06"/>
<use href="#bh" x="889.50" y="371.52"/>
<use href="#bh" x="889.50" y="384.98"/>
<use href="#bh" x="889.50" y="398.44"/>
<use href="#bh" x="889.50" y="438.80"/>
<use href="#bh" x="889.50" y="452.26"/>
<use href="#bh" x="889.50" y="465.72"/>
<use href="#bh" x="889.50" y="479.18"/>
<use href="#bh" x="889.50" y="492.64"/>
<use href="#bh" x="902.96" y="344.60"/>
<use href="#bh" x="902.96" y="358.06"/>
<use href="#bh" x="902.96" y="371.52"/>
<use href="#bh" x="902.96" y="384.98"/>
<use href="#bh" x="902.96" y="398.44"/>
<use href="#bh" x="902.96" y="438.80"/>
<use href="#bh" x="902.96" y="452.26"/>
<use href="#bh" x="902.96" y="465.72"/>
<use href="#bh" x="902.96" y="479.18"/>
<use href="#bh" x="902.96" y="492.64"/>
<text transform="translate(687.60,331.50) rotate(-90)" font-family="Liberation Sans" font-size="7.6" fill="#c6c6c6" text-anchor="middle" dominant-baseline="central">1</text>
<text transform="translate(687.60,504.50) rotate(-90)" font-family="Liberation Sans" font-size="7.6" fill="#c6c6c6" text-anchor="middle" dominant-baseline="central">1</text>
<text transform="translate(701.06,331.50) rotate(-90)" font-family="Liberation Sans" font-size="7.6" fill="#c6c6c6" text-anchor="middle" dominant-baseline="central">2</text>
<text transform="translate(701.06,504.50) rotate(-90)" font-family="Liberation Sans" font-size="7.6" fill="#c6c6c6" text-anchor="middle" dominant-baseline="central">2</text>
<text transform="translate(714.52,331.50) rotate(-90)" font-family="Liberation Sans" font-size="7.6" fill="#c6c6c6" text-anchor="middle" dominant-baseline="central">3</text>
<text transform="translate(714.52,504.50) rotate(-90)" font-family="Liberation Sans" font-size="7.6" fill="#c6c6c6" text-anchor="middle" dominant-baseline="central">3</text>
<text transform="translate(727.98,331.50) rotate(-90)" font-family="Liberation Sans" font-size="7.6" fill="#c6c6c6" text-anchor="middle" dominant-baseline="central">4</text>
<text transform="translate(727.98,504.50) rotate(-90)" font-family="Liberation Sans" font-size="7.6" fill="#c6c6c6" text-anchor="middle" dominant-baseline="central">4</text>
<text transform="translate(741.44,331.50) rotate(-90)" font-family="Liberation Sans" font-size="7.6" fill="#c6c6c6" text-anchor="middle" dominant-baseline="central">5</text>
<text transform="translate(741.44,504.50) rotate(-90)" font-family="Liberation Sans" font-size="7.6" fill="#c6c6c6" text-anchor="middle" dominant-baseline="central">5</text>
<text transform="translate(754.90,331.50) rotate(-90)" font-family="Liberation Sans" font-size="7.6" fill="#c6c6c6" text-anchor="middle" dominant-baseline="central">6</text>
<text transform="translate(754.90,504.50) rotate(-90)" font-family="Liberation Sans" font-size="7.6" fill="#c6c6c6" text-anchor="middle" dominant-baseline="central">6</text>
<text transform="translate(768.36,331.50) rotate(-90)" font-family="Liberation Sans" font-size="7.6" fill="#c6c6c6" text-anchor="middle" dominant-baseline="central">7</text>
<text transform="translate(768.36,504.50) rotate(-90)" font-family="Liberation Sans" font-size="7.6" fill="#c6c6c6" text-anchor="middle" dominant-baseline="central">7</text>
<text transform="translate(781.82,331.50) rotate(-90)" font-family="Liberation Sans" font-size="7.6" fill="#c6c6c6" text-anchor="middle" dominant-baseline="central">8</text>
<text transform="translate(781.82,504.50) rotate(-90)" font-family="Liberation Sans" font-size="7.6" fill="#c6c6c6" text-anchor="middle" dominant-baseline="central">8</text>
<text transform="translate(795.28,331.50) rotate(-90)" font-family="Liberation Sans" font-size="7.6" fill="#c6c6c6" text-anchor="middle" dominant-baseline="central">9</text>
<text transform="translate(795.28,504.50) rotate(-90)" font-family="Liberation Sans" font-size="7.6" fill="#c6c6c6" text-anchor="middle" dominant-baseline="central">9</text>
<text transform="translate(808.74,331.50) rotate(-90)" font-family="Liberation Sans" font-size="7.6" fill="#c6c6c6" text-anchor="middle" dominant-baseline="central">10</text>
<text transform="translate(808.74,504.50) rotate(-90)" font-family="Liberation Sans" font-size="7.6" fill="#c6c6c6" text-anchor="middle" dominant-baseline="central">10</text>
<text transform="translate(822.20,331.50) rotate(-90)" font-family="Liberation Sans" font-size="7.6" fill="#c6c6c6" text-anchor="middle" dominant-baseline="central">11</text>
<text transform="translate(822.20,504.50) rotate(-90)" font-family="Liberation Sans" font-size="7.6" fill="#c6c6c6" text-anchor="middle" dominant-baseline="central">11</text>
<text transform="translate(835.66,331.50) rotate(-90)" font-family="Liberation Sans" font-size="7.6" fill="#c6c6c6" text-anchor="middle" dominant-baseline="central">12</text>
<text transform="translate(835.66,504.50) rotate(-90)" font-family="Liberation Sans" font-size="7.6" fill="#c6c6c6" text-anchor="middle" dominant-baseline="central">12</text>
<text transform="translate(849.12,331.50) rotate(-90)" font-family="Liberation Sans" font-size="7.6" fill="#c6c6c6" text-anchor="middle" dominant-baseline="central">13</text>
<text transform="translate(849.12,504.50) rotate(-90)" font-family="Liberation Sans" font-size="7.6" fill="#c6c6c6" text-anchor="middle" dominant-baseline="central">13</text>
<text transform="translate(862.58,331.50) rotate(-90)" font-family="Liberation Sans" font-size="7.6" fill="#c6c6c6" text-anchor="middle" dominant-baseline="central">14</text>
<text transform="translate(862.58,504.50) rotate(-90)" font-family="Liberation Sans" font-size="7.6" fill="#c6c6c6" text-anchor="middle" dominant-baseline="central">14</text>
<text transform="translate(876.04,331.50) rotate(-90)" font-family="Liberation Sans" font-size="7.6" fill="#c6c6c6" text-anchor="middle" dominant-baseline="central">15</text>
<text transform="translate(876.04,504.50) rotate(-90)" font-family="Liberation Sans" font-size="7.6" fill="#c6c6c6" text-anchor="middle" dominant-baseline="central">15</text>
<text transform="translate(889.50,331.50) rotate(-90)" font-family="Liberation Sans" font-size="7.6" fill="#c6c6c6" text-anchor="middle" dominant-baseline="central">16</text>
<text transform="translate(889.50,504.50) rotate(-90)" font-family="Liberation Sans" font-size="7.6" fill="#c6c6c6" text-anchor="middle" dominant-baseline="central">16</text>
<text transform="translate(902.96,331.50) rotate(-90)" font-family="Liberation Sans" font-size="7.6" fill="#c6c6c6" text-anchor="middle" dominant-baseline="central">17</text>
<text transform="translate(902.96,504.50) rotate(-90)" font-family="Liberation Sans" font-size="7.6" fill="#c6c6c6" text-anchor="middle" dominant-baseline="central">17</text>
<text transform="translate(675.60,344.30) rotate(-90)" font-family="Liberation Sans" font-size="7.6" fill="#c6c6c6" text-anchor="middle" dominant-baseline="central">J</text>
<text transform="translate(915.40,344.30) rotate(-90)" font-family="Liberation Sans" font-size="7.6" fill="#c6c6c6" text-anchor="middle" dominant-baseline="central">J</text>
<text transform="translate(675.60,357.76) rotate(-90)" font-family="Liberation Sans" font-size="7.6" fill="#c6c6c6" text-anchor="middle" dominant-baseline="central">I</text>
<text transform="translate(915.40,357.76) rotate(-90)" font-family="Liberation Sans" font-size="7.6" fill="#c6c6c6" text-anchor="middle" dominant-baseline="central">I</text>
<text transform="translate(675.60,371.22) rotate(-90)" font-family="Liberation Sans" font-size="7.6" fill="#c6c6c6" text-anchor="middle" dominant-baseline="central">H</text>
<text transform="translate(915.40,371.22) rotate(-90)" font-family="Liberation Sans" font-size="7.6" fill="#c6c6c6" text-anchor="middle" dominant-baseline="central">H</text>
<text transform="translate(675.60,384.68) rotate(-90)" font-family="Liberation Sans" font-size="7.6" fill="#c6c6c6" text-anchor="middle" dominant-baseline="central">G</text>
<text transform="translate(915.40,384.68) rotate(-90)" font-family="Liberation Sans" font-size="7.6" fill="#c6c6c6" text-anchor="middle" dominant-baseline="central">G</text>
<text transform="translate(675.60,398.14) rotate(-90)" font-family="Liberation Sans" font-size="7.6" fill="#c6c6c6" text-anchor="middle" dominant-baseline="central">F</text>
<text transform="translate(915.40,398.14) rotate(-90)" font-family="Liberation Sans" font-size="7.6" fill="#c6c6c6" text-anchor="middle" dominant-baseline="central">F</text>
<text transform="translate(675.60,438.50) rotate(-90)" font-family="Liberation Sans" font-size="7.6" fill="#c6c6c6" text-anchor="middle" dominant-baseline="central">E</text>
<text transform="translate(915.40,438.50) rotate(-90)" font-family="Liberation Sans" font-size="7.6" fill="#c6c6c6" text-anchor="middle" dominant-baseline="central">E</text>
<text transform="translate(675.60,451.96) rotate(-90)" font-family="Liberation Sans" font-size="7.6" fill="#c6c6c6" text-anchor="middle" dominant-baseline="central">D</text>
<text transform="translate(915.40,451.96) rotate(-90)" font-family="Liberation Sans" font-size="7.6" fill="#c6c6c6" text-anchor="middle" dominant-baseline="central">D</text>
<text transform="translate(675.60,465.42) rotate(-90)" font-family="Liberation Sans" font-size="7.6" fill="#c6c6c6" text-anchor="middle" dominant-baseline="central">C</text>
<text transform="translate(915.40,465.42) rotate(-90)" font-family="Liberation Sans" font-size="7.6" fill="#c6c6c6" text-anchor="middle" dominant-baseline="central">C</text>
<text transform="translate(675.60,478.88) rotate(-90)" font-family="Liberation Sans" font-size="7.6" fill="#c6c6c6" text-anchor="middle" dominant-baseline="central">B</text>
<text transform="translate(915.40,478.88) rotate(-90)" font-family="Liberation Sans" font-size="7.6" fill="#c6c6c6" text-anchor="middle" dominant-baseline="central">B</text>
<text transform="translate(675.60,492.34) rotate(-90)" font-family="Liberation Sans" font-size="7.6" fill="#c6c6c6" text-anchor="middle" dominant-baseline="central">A</text>
<text transform="translate(915.40,492.34) rotate(-90)" font-family="Liberation Sans" font-size="7.6" fill="#c6c6c6" text-anchor="middle" dominant-baseline="central">A</text>
</g>
<g id="pir">
<rect x="795" y="183.6" width="189.6" height="132.9" fill="#046710"/>
<rect x="826.7" y="188.2" width="126.1" height="123.5" rx="3" fill="#ececec"/>
<rect x="832.2" y="193.6" width="115.9" height="113" fill="#dfeddc"/>
<circle cx="889.8" cy="253.4" r="59.3" fill="#aab3a7"/>
<circle cx="889.8" cy="250.1" r="59.3" fill="#d6d6d6"/>
<ellipse cx="889.8" cy="250.1" rx="59.3" ry="38" fill="#dddddd"/>
<ellipse cx="889.8" cy="250.1" rx="59.3" ry="21" fill="#e3e3e3"/>
<path d="M830.5 250.1 A59.3 59.3 0 0 1 949.1 250.1 Z" fill="#e8e8e8"/>
<path d="M832.8 250.1 A57 57 0 0 1 946.8 250.1" fill="none" stroke="#f6f6f6" stroke-width="4"/>
<circle cx="889.8" cy="250.1" r="43.4" fill="none" stroke="#f3f3f3" stroke-width="1"/>
<g stroke="#f1f1f1" stroke-width="1">
<line x1="905.40" y1="250.10" x2="933.20" y2="250.10"/>
<line x1="902.42" y1="259.27" x2="924.91" y2="275.61"/>
<line x1="894.62" y1="264.94" x2="903.21" y2="291.38"/>
<line x1="884.98" y1="264.94" x2="876.39" y2="291.38"/>
<line x1="877.18" y1="259.27" x2="854.69" y2="275.61"/>
<line x1="874.20" y1="250.10" x2="846.40" y2="250.10"/>
<line x1="877.18" y1="240.93" x2="854.69" y2="224.59"/>
<line x1="884.98" y1="235.26" x2="876.39" y2="208.82"/>
<line x1="894.62" y1="235.26" x2="903.21" y2="208.82"/>
<line x1="902.42" y1="240.93" x2="924.91" y2="224.59"/>
<line x1="933.20" y1="250.10" x2="947.30" y2="250.10"/>
<line x1="911.50" y1="287.69" x2="918.55" y2="299.90"/>
<line x1="868.10" y1="287.69" x2="861.05" y2="299.90"/>
<line x1="846.40" y1="250.10" x2="832.30" y2="250.10"/>
<line x1="868.10" y1="212.51" x2="861.05" y2="200.30"/>
<line x1="911.50" y1="212.51" x2="918.55" y2="200.30"/>
</g>
<circle cx="889.8" cy="250.1" r="15.6" fill="#dedede" stroke="#ececec" stroke-width="1"/>
<circle cx="889.8" cy="250.1" r="1" fill="#f7f7f7"/>
<circle cx="810" cy="250.2" r="9.6" fill="#c2c2c2"/><circle cx="810" cy="250.2" r="6.3" fill="#fff"/>
<circle cx="969.3" cy="250.2" r="9.6" fill="#c2c2c2"/><circle cx="969.3" cy="250.2" r="6.3" fill="#fff"/>
<circle cx="809.5" cy="200" r="3.7" fill="#b4b4b4"/><circle cx="809.5" cy="200" r="2.3" fill="#d2d2d2"/><circle cx="809.5" cy="200" r="0.8" fill="#a0a0a0"/>
<circle cx="809.5" cy="211" r="3.7" fill="#b4b4b4"/><circle cx="809.5" cy="211" r="2.3" fill="#d2d2d2"/><circle cx="809.5" cy="211" r="0.8" fill="#a0a0a0"/>
<circle cx="809.5" cy="221.6" r="3.7" fill="#b4b4b4"/><circle cx="809.5" cy="221.6" r="2.3" fill="#d2d2d2"/><circle cx="809.5" cy="221.6" r="0.8" fill="#a0a0a0"/>
<text x="809.5" y="193.5" font-family="Liberation Sans" font-size="8.4" fill="#fff" text-anchor="middle">S</text>
<text x="809.5" y="235" font-family="Liberation Sans" font-size="8.4" fill="#fff" text-anchor="middle">L</text>
<text transform="translate(811,287.6) rotate(90)" font-family="Liberation Sans" font-size="8.2" fill="#fff" text-anchor="middle" dominant-baseline="central" letter-spacing="0.2">PARALLAX</text>
<text transform="translate(977,189.5) rotate(90)" font-family="Liberation Sans" font-size="6.8" fill="#fff" dominant-baseline="central" letter-spacing="0.3">PIR SENSOR</text>
<text transform="translate(966.2,196) rotate(90)" font-family="Liberation Sans" font-size="6.8" fill="#fff" dominant-baseline="central" letter-spacing="0.3">REV B</text>
<text transform="translate(971,286.5) rotate(90)" font-family="Liberation Sans" font-size="8.2" fill="#fff" text-anchor="middle" dominant-baseline="central" letter-spacing="0.4">555-28027</text>
<rect x="874.30" y="320" width="3.4" height="25.5" rx="1.7" fill="#cdcdcd"/>
<rect x="887.80" y="320" width="3.4" height="25.5" rx="1.7" fill="#cdcdcd"/>
<rect x="901.30" y="320" width="3.4" height="25.5" rx="1.7" fill="#cdcdcd"/>
<rect x="869" y="316.5" width="41" height="5.5" fill="#1f1f1f"/>
<rect x="882.3" y="316.5" width="1" height="5.5" fill="#3a3a3a"/><rect x="896" y="316.5" width="1" height="5.5" fill="#3a3a3a"/>
</g>
<g id="led">
<path d="M687.6 334 V344.3" stroke="#939393" stroke-width="3.2" stroke-linecap="round"/>
<path d="M697 334 L701 344.3" stroke="#939393" stroke-width="3.2" stroke-linecap="round"/>
<circle cx="687.6" cy="344.6" r="2.3" fill="#6f6f6f"/><circle cx="701" cy="344.6" r="2.3" fill="#6f6f6f"/>
<ellipse cx="693.2" cy="331.6" rx="10.1" ry="4.4" transform="rotate(-9 693.2 331.6)" fill="#84201f"/>
<path d="M683.2 331 V315.2 A9.4 9.4 0 0 1 702 315.2 V331 Z" fill="#7f1e20"/>
<path d="M684 332.8 Q693 336 702.6 330.6" fill="none" stroke="#a04545" stroke-width="0.9"/>
</g>
<g id="res">
<path d="M687.6 398.5 V452" stroke="#8f8f8f" stroke-width="3" stroke-linecap="round"/>
<path d="M684.5 405 Q687.6 402.5 690.7 405 L694 410 V417 L692.5 419 V431 L694 433 V440 L690.7 444.8 Q687.6 447 684.5 444.8 L681.2 440 V433 L682.7 431 V419 L681.2 417 V410 Z" fill="#d8b06c"/>
<rect x="681.2" y="412.5" width="12.8" height="1.3" fill="#8a7a2a"/><rect x="681.2" y="412.5" width="4" height="1.3" fill="#d8cf2a"/>
<rect x="682.5" y="421" width="10.2" height="3.8" fill="#8b4513"/>
<rect x="682.5" y="428.2" width="10.2" height="3.5" fill="#f71c1c"/>
<rect x="681.2" y="435.1" width="12.8" height="3.8" fill="#f71c1c"/>
</g>
<g fill="none" stroke-width="3" stroke-linecap="round" stroke-linejoin="round">
<path d="M687.6 465.4 V555.6 Q687.6 567.6 675.6 567.6 H442.3 Q430.3 567.6 430.3 579.6 V598.3" stroke="#363a3d"/>
<path d="M701 398.3 L700.2 545.5 Q700.2 559.5 686.2 559.5 H457.4 Q443.4 559.5 443.4 573.5 V598.5" stroke="#ab7a48"/>
<path d="M876 357.8 L880.4 558.3 Q880.4 571.8 866.9 571.8 H613.3 Q599.8 571.8 599.8 585.3 V598.3" stroke="#0a9bd7"/>
<path d="M889.5 357.8 L897.2 885.3 Q897.2 898.8 883.7 898.8 H505.5 Q492 898.8 492 885.3 V854" stroke="#e41d21"/>
<path d="M903 357.8 L914.3 862.3 Q914.3 875.8 900.8 875.8 H532.7 Q519.2 875.8 519.2 862.3 V854" stroke="#363a3d"/>
</g>
</svg>
<!--/CIRC-->

<!-- CODE PANEL -->
<div id="cp" class="a">
  <div class="a" style="left:8.5px;top:8.6px;width:295.5px;height:40.5px;background:#efeff1;border:1px solid #e2e4e8;box-sizing:border-box;border-radius:4px;box-shadow:0 3px 5px rgba(0,0,0,0.07);">
    <span class="a" style="left:12px;top:9px;font-size:19px;color:#3c4043;">Text</span>
  </div>

  <div class="a" style="left:313px;top:0;width:1px;height:60px;background:#dde1e6;"></div>
  <div class="a" style="left:335px;top:10.4px;width:47.5px;height:39px;border:1px solid #dde1e6;box-sizing:border-box;border-radius:4px;"></div>
  <div class="a" style="left:393px;top:10.4px;width:46.5px;height:39px;border:1px solid #dde1e6;box-sizing:border-box;border-radius:4px;"></div>
  <div class="a" style="left:450px;top:10.4px;width:47.5px;height:39px;border:1px solid #dde1e6;box-sizing:border-box;border-radius:4px;"></div>
  <div class="a" style="left:509px;top:0;width:1px;height:60px;background:#dde1e6;"></div>
  <div class="a" style="left:518.7px;top:8.5px;width:233.5px;height:41px;background:#efeff1;border:1px solid #e2e4e8;box-sizing:border-box;border-radius:4px;box-shadow:0 3px 5px rgba(0,0,0,0.07);">
    <span class="a" id="tdev" style="left:12px;top:9.5px;font-size:19px;letter-spacing:-0.42px;color:#3c4549;white-space:nowrap;">1 (Arduino Uno R3)</span>
  </div>
  <div class="a" style="left:0;top:61px;width:761px;height:1px;background:#dde1e6;"></div>
  <div class="a" style="left:0;top:62px;width:761px;height:756px;background:#fff;"></div>
  <div class="a" style="left:0;top:62px;width:48px;height:756px;background:#f7f7f7;border-right:1px solid #ddd;box-sizing:border-box;border-top-right-radius:3px;"></div>
  <div class="a" style="left:0;top:62px;width:1px;height:756px;background:#dde1e6;z-index:5;"></div>
<div class="code" id="code" style="left:60.2px;top:68px;"><span class="k">int</span> buttonState = <span class="n">0</span>;

<span class="k">void</span> setup()
{
  pinMode(<span class="n">2</span>, INPUT);
  pinMode(<span class="n">13</span>, OUTPUT);
}

<span class="k">void</span> loop()
{
  buttonState = digitalRead(<span class="n">2</span>);
  <span class="k">if</span> (buttonState == HIGH) {
    digitalWrite(<span class="n">13</span>, HIGH);
    delay(<span class="n">2000</span>);
  } <span class="k">else</span> {
    digitalWrite(<span class="n">13</span>, LOW);
  }
  delay(<span class="n">10</span>);
}

<span class="c">//</span></div>
<div class="ln" id="lns" style="left:0;top:67px;width:42px;line-height:20px;">1<br>2<br>3<br>4<br>5<br>6<br>7<br>8<br>9<br>10<br>11<br>12<br>13<br>14<br>15<br>16<br>17<br>18<br>19<br>20<br>21</div>
</div>

<!-- ICONS OVERLAY -->
<svg class="a" style="left:0;top:0;z-index:10;" width="1920" height="938" viewBox="0 0 1920 938">
  <!-- rotate -->
  <g fill="#34495e">
    <path d="M15.5 97.4 L32.4 88.1 L32.4 97.4 Z M20.3 95.6 L30.6 95.6 L30.6 90.8 Z" fill-rule="evenodd"/>
    <path d="M34.2 79.8 L44 97.4 L34.2 97.4 Z"/>
    <path d="M19.1 89.6 Q20.6 82.2 29.6 82.2" fill="none" stroke="#2e4258" stroke-width="2" stroke-linecap="round"/>
    <path d="M28.8 79.8 L31.3 82.2 L28.8 84.6" fill="none" stroke="#2e4258" stroke-width="2" stroke-linecap="round" stroke-linejoin="round"/>
  </g>
  <!-- trash -->
  <g fill="none" stroke="#34495e">
    <rect x="85.2" y="78.1" width="9.8" height="4" rx="1.5" stroke-width="1.8"/>
    <path d="M81.4 82.6 H98.7" stroke-width="2.8" stroke-linecap="round"/>
    <path d="M82.6 83 V97.2 Q82.6 98.2 83.6 98.2 H96.6 Q97.6 98.2 97.6 97.2 V83" stroke-width="2"/>
    <path d="M88 85.2 V94.6 M92.2 85.2 V94.6" stroke-width="1.9"/>
  </g>
  <!-- undo -->
  <path d="M141.6 87.9 L151.1 81.3 L151.1 85.4 C157.5 85.6 161.4 90 161.2 96.9 C159.3 92.8 155.6 90.6 151.1 90.6 L151.1 94.2 Z" fill="#000"/>
  <!-- redo -->
  <path d="M221 87.9 L211.5 81.3 L211.5 85.4 C205.1 85.6 201 90 201.2 96.9 C203.3 92.8 207 90.6 211.5 90.6 L211.5 94.2 Z" fill="#000"/>
  <!-- notes -->
  <g>
    <path d="M264.2 77.5 H280.6 Q282.1 77.5 282.1 79 V96.1 Q282.1 97.6 280.6 97.6 H275.3 L272.3 101.2 L269.3 97.6 H264.2 Q262.7 97.6 262.7 96.1 V79 Q262.7 77.5 264.2 77.5 Z" fill="none" stroke="#34495e" stroke-width="2.4"/>
    <path d="M267.4 82.6 H277.8 M267.4 87.7 H275.2 M267.4 92.6 H277.8" stroke="#34495e" stroke-width="2.4" stroke-linecap="round"/>
  </g>
  <!-- eye -->
  <g>
    <path d="M324.2 77.5 H340.6 Q342.1 77.5 342.1 79 V96.1 Q342.1 97.6 340.6 97.6 H335.3 L332.3 101.2 L329.3 97.6 H324.2 Q322.7 97.6 322.7 96.1 V79 Q322.7 77.5 324.2 77.5 Z" fill="none" stroke="#98a3ae" stroke-width="2.4"/>
    <path d="M318.8 87.6 C323 82 328 80 332.6 80 C337.2 80 342.2 82 346.4 87.6 C342.2 93.2 337.2 95.2 332.6 95.2 C328 95.2 323 93.2 318.8 87.6 Z" fill="#34495e" stroke="#f3f4f6" stroke-width="1.6"/>
    <path d="M318.8 87.6 C323 82 328 80 332.6 80 C337.2 80 342.2 82 346.4 87.6 C342.2 93.2 337.2 95.2 332.6 95.2 C328 95.2 323 93.2 318.8 87.6 Z" fill="#34495e"/>
    <circle cx="332.5" cy="87.6" r="4.9" fill="#f3f4f6"/>
  </g>
  <!-- code icon -->
  <path d="M1397.8 78.9 H1421.1 Q1422.7 78.9 1422.7 80.5 V84 H1396.2 V80.5 Q1396.2 78.9 1397.8 78.9 Z" fill="#fff"/>
  <rect x="1396.75" y="79.5" width="25.4" height="18.9" rx="1.2" fill="none" stroke="#fff" stroke-width="1.1"/>
  <g fill="#0a96d8"><circle cx="1399.6" cy="81.4" r="1.3"/><circle cx="1403.3" cy="81.4" r="1.3"/><circle cx="1407.1" cy="81.4" r="1.3"/></g>
  <path d="M1407.1 86.8 L1401.8 91 L1407.1 95.2 M1415.7 86.1 L1412 95.2" fill="none" stroke="#fff" stroke-width="1.9" stroke-linecap="round" stroke-linejoin="round"/>
  <!-- play -->
  <path d="M1516 80.3 L1530.2 89.1 L1516 97.9 Z" fill="#2f4054" stroke="#2f4054" stroke-width="1" stroke-linejoin="round"/>
  <!-- chip (header) -->
  <g fill="#fff">
    <path d="M1757 16 H1768.1 Q1770.1 16 1770.1 18 V39.8 Q1770.1 41.8 1768.1 41.8 H1757 Q1755 41.8 1755 39.8 V18 Q1755 16 1757 16 Z"/>
    <rect x="1751.2" y="18.9" width="2.8" height="4.9"/><rect x="1751.2" y="26.3" width="2.8" height="5.2"/><rect x="1751.2" y="34" width="2.8" height="5.2"/>
    <rect x="1771.1" y="18.9" width="2.8" height="4.9"/><rect x="1771.1" y="26.3" width="2.8" height="5.2"/><rect x="1771.1" y="34" width="2.8" height="5.2"/>
  </g>
  <path d="M1760 17 A2.6 2.6 0 0 0 1765.2 17 Z" fill="#0a96d8"/>
  <!-- table (header) -->
  <g>
    <rect x="1811.9" y="18.9" width="26.8" height="6" fill="#000"/>
    <rect x="1812.6" y="24.5" width="25.4" height="14.3" fill="none" stroke="#000" stroke-width="1.4"/>
    <path d="M1812 29 H1838.6 M1812 33.5 H1838.6 M1819 24.5 V39" stroke="#000" stroke-width="1.3"/>
  </g>
  <!-- avatar -->
  <defs>
    <linearGradient id="avg" x1="0" y1="0" x2="0" y2="1"><stop offset="0" stop-color="#b6c2d2"/><stop offset="1" stop-color="#93a3b9"/></linearGradient>
    <clipPath id="avc"><circle cx="1889" cy="28.4" r="28"/></clipPath>
  </defs>
  <circle cx="1889" cy="28.4" r="28" fill="url(#avg)"/>
  <g clip-path="url(#avc)" fill="#5b6678">
    <path d="M1889 2.9 C1896 2.9 1902.4 6 1902.4 14 C1902.4 18 1902 22 1901 26 C1900 31 1897.5 34.5 1896 36.5 C1896.5 40 1898 43 1904 45.5 C1910 47.5 1914 47.2 1918 48 L1918 60 L1860 60 L1860 48 C1864 47.2 1868 47.5 1874 45.5 C1880 43 1881.5 40 1882 36.5 C1880.5 34.5 1878 31 1877 26 C1876 22 1875 18 1875 14 C1875 6 1882 2.9 1889 2.9 Z"/>
  </g>
  <!-- fit view brackets -->
  <g fill="none" stroke="#b3b5b8" stroke-width="2">
    <path d="M22.5 147.5 V143.4 H27.2 M34.9 143.4 H39.1 V147.5 M39.1 155.5 V159.6 H34.9 M27.2 159.6 H22.5 V155.5"/>
  </g>
  <!-- dropdown carets -->
  <path d="M1433.6 147.8 H1443.6 L1438.6 153.8 Z" fill="#111"/>
  <path d="M1881.6 147.6 H1891.4 L1886.5 153.8 Z" fill="#111"/>
  <!-- download -->
  <path d="M1516.8 142.8 H1521 V149.3 H1524.9 L1518.9 157.5 L1512.9 149.3 H1516.8 Z" fill="#000"/>
  <rect x="1507.4" y="159" width="22.5" height="2.7" fill="#000"/>
  <!-- storage box -->
  <path d="M1570.4 140.6 H1582.2 L1586.8 147.6 H1565.8 Z" fill="#c9ced5" stroke="#34495e" stroke-width="1.3" stroke-linejoin="round"/>
  <path d="M1570.6 143.3 H1581.8 M1569.4 145.6 H1583" stroke="#34495e" stroke-width="1.1"/>
  <path d="M1565 147.4 H1588 V158.6 Q1588 160.3 1586.3 160.3 H1566.7 Q1565 160.3 1565 158.6 Z" fill="#34495e"/>
  <rect x="1570.9" y="151.2" width="10.4" height="1.8" fill="#c9ced5"/>
  <!-- bug -->
  <g fill="#34495e" stroke="#34495e" stroke-linecap="round">
    <path d="M1631.4 147 Q1631.4 142.3 1634 142.3 Q1636.6 142.3 1636.6 147 Z" stroke="none"/>
    <path d="M1634 146 C1638.8 146 1639.8 150 1639.6 154 C1639.4 158 1637.5 161 1635.6 161 C1634.9 161 1634.8 158 1634.8 156 L1633.2 156 C1633.2 158 1633.1 161 1632.4 161 C1630.5 161 1628.6 158 1628.4 154 C1628.2 150 1629.2 146 1634 146 Z" stroke="none"/>
    <path d="M1629.6 139.6 Q1631.8 140.4 1633 142.6 M1638.4 139.6 Q1636.2 140.4 1635 142.6" fill="none" stroke-width="1.3"/>
    <path d="M1626.3 145.4 L1631 148.6 M1641.7 145.4 L1637 148.6 M1623.5 152.6 L1628.8 150.6 M1644.5 152.6 L1639.2 150.6 M1625.3 158.4 L1628.8 154.2 M1642.7 158.4 L1639.2 154.2" fill="none" stroke-width="1.3"/>
  </g>
</svg>

</body></html>
